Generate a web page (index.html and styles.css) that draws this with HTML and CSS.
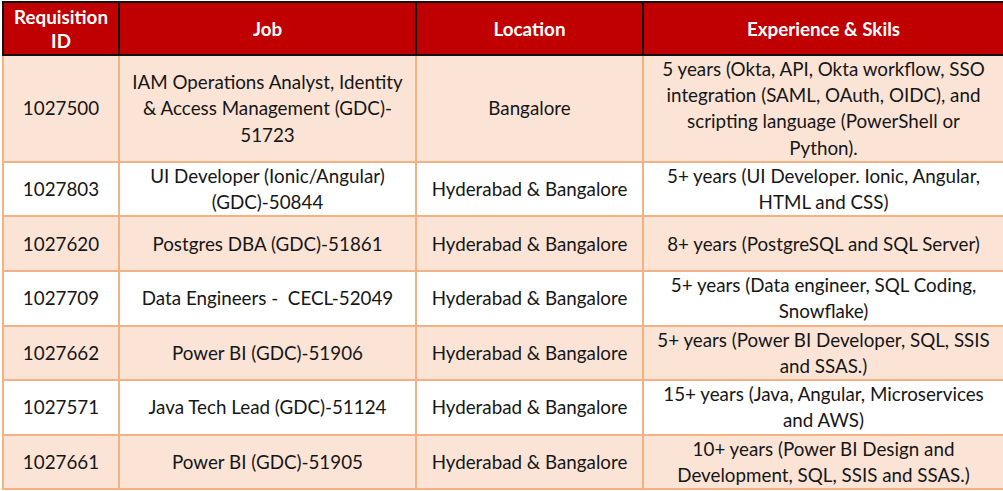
FILE: index.html
```html
<!DOCTYPE html>
<html>
<head>
<meta charset="utf-8">
<link rel="stylesheet" href="styles.css">
</head>
<body>
<table class="jobs">
  <colgroup>
    <col class="c-id"><col class="c-job"><col class="c-loc"><col class="c-exp">
  </colgroup>
  <thead>
    <tr>
      <th>Requisition<br>ID</th>
      <th>Job</th>
      <th>Location</th>
      <th>Experience &amp; Skils</th>
    </tr>
  </thead>
  <tbody>
    <tr class="tall">
      <td>1027500</td>
      <td>IAM Operations Analyst, Identity<br>&amp; Access Management (GDC)-<br>51723</td>
      <td>Bangalore</td>
      <td>5 years (Okta, API, Okta workflow, SSO<br>integration (SAML, OAuth, OIDC), and<br>scripting language (PowerShell or<br>Python).</td>
    </tr>
    <tr class="plain">
      <td>1027803</td>
      <td>UI Developer (Ionic/Angular)<br>(GDC)-50844</td>
      <td>Hyderabad &amp; Bangalore</td>
      <td>5+ years (UI Developer. Ionic, Angular,<br>HTML and CSS)</td>
    </tr>
    <tr>
      <td>1027620</td>
      <td>Postgres DBA (GDC)-51861</td>
      <td>Hyderabad &amp; Bangalore</td>
      <td>8+ years (PostgreSQL and SQL Server)</td>
    </tr>
    <tr class="plain">
      <td>1027709</td>
      <td>Data Engineers -&nbsp; CECL-52049</td>
      <td>Hyderabad &amp; Bangalore</td>
      <td>5+ years (Data engineer, SQL Coding,<br>Snowflake)</td>
    </tr>
    <tr>
      <td>1027662</td>
      <td>Power BI (GDC)-51906</td>
      <td>Hyderabad &amp; Bangalore</td>
      <td>5+ years (Power BI Developer, SQL, SSIS<br>and SSAS.)</td>
    </tr>
    <tr class="plain">
      <td>1027571</td>
      <td>Java Tech Lead (GDC)-51124</td>
      <td>Hyderabad &amp; Bangalore</td>
      <td>15+ years (Java, Angular, Microservices<br>and AWS)</td>
    </tr>
    <tr>
      <td>1027661</td>
      <td>Power BI (GDC)-51905</td>
      <td>Hyderabad &amp; Bangalore</td>
      <td>10+ years (Power BI Design and<br>Development, SQL, SSIS and SSAS.)</td>
    </tr>
  </tbody>
</table>
</body>
</html>
```

FILE: styles.css
```css
html, body {
  background: #ffffff;
}
body {
  margin: 1px 0 0 2px;
  font-family: Lato, "Open Sans", sans-serif;
}
.jobs {
  border-collapse: collapse;
  table-layout: fixed;
  width: 1001px;
  font-size: 18.8px;
  color: #161616;
}
.c-id { width: 116px; }
.c-job { width: 297px; }
.c-loc { width: 227px; }
.c-exp { width: 361px; }

.jobs th {
  background: #c00000;
  color: #ffffff;
  font-weight: 700;
  border: 2px solid #111111;
  height: 49px;
  padding: 1px 2px;
  line-height: 24px;
  text-align: center;
  vertical-align: middle;
}
.jobs td {
  background: #fbe4d6;
  border: 2px solid #f4b183;
  height: 52.6px;
  padding: 0 2px;
  line-height: 26px;
  text-align: center;
  vertical-align: middle;
}
.jobs tr.tall td {
  line-height: 26.2px;
}
.jobs tr.plain td {
  background: #ffffff;
}
```
